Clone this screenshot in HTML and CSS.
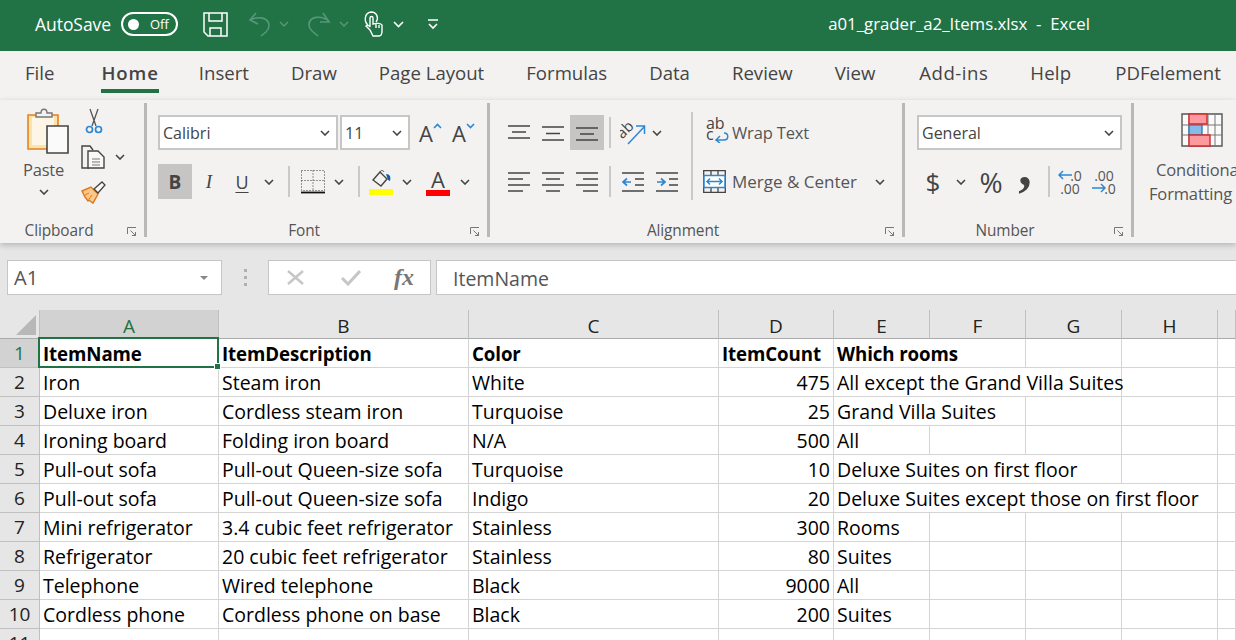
FILE: index.html
```html
<!DOCTYPE html>
<html lang="en">
<head>
<meta charset="utf-8">
<title>a01_grader_a2_Items.xlsx - Excel</title>
<link rel="stylesheet" href="styles.css">
</head>
<body>
<svg class="sprite" aria-hidden="true">
  <symbol id="chev" viewBox="0 0 10 6"><path d="M1 1l4 4 4-4" fill="none" stroke="#444" stroke-width="1.6"/></symbol>
  <symbol id="launch" viewBox="0 0 10 10"><path d="M.5 7V.5H9M3.5 3.5l5 5M8.5 5v3.5H5" fill="none" stroke="#777" stroke-width="1"/></symbol>
</svg>
<div class="app">
<header class="titlebar">
  <span class="autosave">AutoSave</span>
  <span class="toggle"><i class="knob"></i><span class="off">Off</span></span>
  <svg class="qa save" width="25" height="25" viewBox="0 0 25 25"><path d="M1 1h23v23H5l-4-4zM6 1v8h13V1M7 24v-8h11v8" fill="none" stroke="#fff" stroke-width="1.5"/></svg>
  <svg class="qa undo" width="24" height="25" viewBox="0 0 24 25"><path d="M8 1L2 8l8 4M2 8c8-4 19-3 19 6 0 3-2 5-3 6l-5 4" fill="none" stroke="#58977a" stroke-width="1.6"/></svg>
  <svg class="qa c1" width="10" height="6"><path d="M1 1l4 4 4-4" fill="none" stroke="#58977a" stroke-width="1.4"/></svg>
  <svg class="qa redo" width="24" height="25" viewBox="0 0 24 25"><path d="M16 1l6 9h-9M22 9C14 3 2 4 2 13c0 3 2 5 3 6l6 5" fill="none" stroke="#58977a" stroke-width="1.6"/></svg>
  <svg class="qa c1b" width="10" height="6"><path d="M1 1l4 4 4-4" fill="none" stroke="#58977a" stroke-width="1.4"/></svg>
  <svg class="qa touch" width="20" height="26" viewBox="0 0 20 26"><path d="M5 14C1 11 1 2 8 1c6 0 8 6 5 10M7 19L3 15c1-1 3-1 4 1V7c0-2 3-2 3 0v6c3-1 8-1 9 1v6c0 3-1 5-3 5H10c-1-2-2-4-3-6zM13 13v4M16 14v3" fill="none" stroke="#fff" stroke-width="1.4"/></svg>
  <svg class="qa c2" width="11" height="7"><path d="M1 1l4.500 4.500L10 1" fill="none" stroke="#fff" stroke-width="1.6"/></svg>
  <svg class="qa more" width="12" height="11" viewBox="0 0 12 11"><path d="M1 1h10M2 5l4 4 4-4" fill="none" stroke="#fff" stroke-width="1.6"/></svg>
  <span class="doc">a01_grader_a2_Items.xlsx &nbsp;-&nbsp; Excel</span>
</header>

<nav class="tabs">
  <span class="tab first">File</span><span class="tab active">Home</span><span class="tab">Insert</span><span class="tab">Draw</span><span class="tab">Page Layout</span><span class="tab">Formulas</span><span class="tab">Data</span><span class="tab">Review</span><span class="tab">View</span><span class="tab addins">Add-ins</span><span class="tab help">Help</span><span class="tab">PDFelement</span>
</nav>

<section class="ribbon">
  <div class="group g-clip">
    <div class="clip-body">
      <div class="paste">
        <svg width="42" height="46" viewBox="0 0 42 46"><path d="M1 7h30v34H1z" fill="#fbe3ae" stroke="#e8801c" stroke-width="1.6"/><path d="M5 9h22v28H5z" fill="#fdf6e6"/><path d="M9 9V5h5c0-5 6-5 6 0h5v4z" fill="#f3f2f1" stroke="#777" stroke-width="1.4"/><path d="M20 18h21v27H20z" fill="#fafafa" stroke="#444" stroke-width="1.6"/></svg>
        <span class="paste-l">Paste</span>
        <svg class="chev" width="10" height="6"><use href="#chev"/></svg>
      </div>
      <div class="clip-small">
        <svg class="scissors" width="18" height="26" viewBox="0 0 18 26"><path d="M5 1l6 17M13 1L7 18" fill="none" stroke="#555" stroke-width="1.3"/><circle cx="4.500" cy="21.500" r="3" fill="none" stroke="#2d87d2" stroke-width="1.700"/><circle cx="13.500" cy="21.500" r="3" fill="none" stroke="#2d87d2" stroke-width="1.700"/></svg>
        <div class="copy-row">
          <svg width="24" height="24" viewBox="0 0 24 24"><path d="M8 23H1V1h8l3 4" fill="none" stroke="#444" stroke-width="1.4"/><path d="M7 6h10l6 6v11H7z" fill="#f8f8f8" stroke="#444" stroke-width="1.4"/><path d="M11 14h8M11 17h8M11 20h8" stroke="#777"/></svg>
          <svg class="chev" width="10" height="6"><use href="#chev"/></svg>
        </div>
        <svg class="brush" width="25" height="23" viewBox="0 0 25 23"><path d="M1 10l9-4 7 7-5 9c-2-1-3-2-4-3l-1 1c-2-2-4-5-6-10z" fill="#fbc88c" stroke="#e0761a" stroke-width="1.4"/><path d="M4 14l4-2M8 18l3-4" stroke="#e0761a"/><path d="M13 8l8-7 3 3-7 8z" fill="#f8f8f8" stroke="#444" stroke-width="1.3"/></svg>
      </div>
    </div>
    <footer class="glabel"><span>Clipboard</span><svg class="launch" width="10" height="10"><use href="#launch"/></svg></footer>
  </div>

  <div class="group g-font">
    <div class="rows">
      <div class="row">
        <div class="select fontsel"><span>Calibri</span><svg width="10" height="6"><use href="#chev"/></svg></div>
        <div class="select sizesel"><span>11</span><svg width="10" height="6"><use href="#chev"/></svg></div>
        <span class="grow">A<svg width="9" height="6"><path d="M1 5l3.500-3.500L8 5" fill="none" stroke="#2d87d2" stroke-width="1.600"/></svg></span>
        <span class="grow shrink">A<svg width="9" height="6"><path d="M1 1l3.500 3.500L8 1" fill="none" stroke="#2d87d2" stroke-width="1.600"/></svg></span>
      </div>
      <div class="row">
        <span class="cell sel fmt b">B</span>
        <span class="cell fmt i">I</span>
        <span class="cell w32 fmt u">U</span>
        <span class="cell w22"><svg width="10" height="6"><use href="#chev"/></svg></span>
        <i class="vsep"></i>
        <span class="cell w30"><svg width="24" height="24" viewBox="0 0 24 24"><path d="M.5.500h23v20H.5zM12 .500v20M.5 10.500h23" stroke="#333" stroke-width="1" stroke-dasharray="1 2" fill="none"/><path d="M0 22.500h24" stroke="#111" stroke-width="1.800"/></svg></span>
        <span class="cell w22"><svg width="10" height="6"><use href="#chev"/></svg></span>
        <i class="vsep"></i>
        <span class="cell w26"><svg width="24" height="26" viewBox="0 0 24 26"><path d="M4 11l7-8 7 7-6 7z" fill="none" stroke="#444" stroke-width="1.400"/><path d="M11 3c1-2 3-2 4 0" fill="none" stroke="#444"/><path d="M17 5c4 0 5 3 4 7l-2-1z" fill="#0f5fa8"/><path d="M0 20h24v6H0z" fill="#ff0"/></svg></span>
        <span class="cell w26"><svg width="10" height="6"><use href="#chev"/></svg></span>
        <span class="cell w36 colA"><span class="letterA">A</span><i class="red"></i></span>
        <span class="cell w18"><svg width="10" height="6"><use href="#chev"/></svg></span>
      </div>
    </div>
    <footer class="glabel"><span>Font</span><svg class="launch" width="10" height="10"><use href="#launch"/></svg></footer>
  </div>

  <div class="group g-align">
    <div class="align-body">
      <div class="rows">
        <div class="row">
          <span class="cell"><svg width="22" height="18" viewBox="0 0 22 18"><path d="M0 2h22M4 8h14M0 14h22" stroke="#444" stroke-width="1.500"/></svg></span>
          <span class="cell"><svg width="22" height="18" viewBox="0 0 22 18"><path d="M0 3h22M4 9.500h14M0 16h22" stroke="#444" stroke-width="1.500"/></svg></span>
          <span class="cell sel"><svg width="22" height="18" viewBox="0 0 22 18"><path d="M0 4h22M4 10h14M0 16h22" stroke="#444" stroke-width="1.500"/></svg></span>
          <i class="vsep sep-a"></i>
          <span class="cell orient"><svg width="26" height="24" viewBox="0 0 26 24"><text x="-2" y="12" transform="rotate(-45 8 10)" class="svg-ab">ab</text><path d="M8 23L24 6M16 5h8.500v8" fill="none" stroke="#2d87d2" stroke-width="1.500"/></svg></span>
          <span class="cell w14"><svg width="10" height="6"><use href="#chev"/></svg></span>
        </div>
        <div class="row">
          <span class="cell"><svg width="22" height="20" viewBox="0 0 22 20"><path d="M0 1h22M0 7h15M0 13h22M0 19h15" stroke="#444" stroke-width="1.500"/></svg></span>
          <span class="cell"><svg width="22" height="20" viewBox="0 0 22 20"><path d="M0 1h22M4 7h14M0 13h22M4 19h14" stroke="#444" stroke-width="1.500"/></svg></span>
          <span class="cell"><svg width="22" height="20" viewBox="0 0 22 20"><path d="M0 1h22M7 7h15M0 13h22M7 19h15" stroke="#444" stroke-width="1.500"/></svg></span>
          <i class="vsep sep-a"></i>
          <span class="cell"><svg width="22" height="20" viewBox="0 0 22 20"><path d="M0 1h22M13 7h9M13 13h9M0 19h22" stroke="#444" stroke-width="1.500"/><path d="M9 10H1M5 6.500L1 10l4 3.500" fill="none" stroke="#2d87d2" stroke-width="1.700"/></svg></span>
          <span class="cell"><svg width="22" height="20" viewBox="0 0 22 20"><path d="M0 1h22M13 7h9M13 13h9M0 19h22" stroke="#444" stroke-width="1.500"/><path d="M1 10h8M5 6.500L9 10l-4 3.500" fill="none" stroke="#2d87d2" stroke-width="1.700"/></svg></span>
        </div>
      </div>
      <div class="wrap-col">
        <div class="cmd">
          <span class="abc"><span>ab</span><span>c</span><svg width="14" height="11" viewBox="0 0 14 11"><path d="M9 1c5 0 5 7 0 7H2M5 4L1 8l4 3" fill="none" stroke="#2d87d2" stroke-width="1.500"/></svg></span>
          <span>Wrap Text</span>
        </div>
        <div class="cmd merge">
          <svg width="23" height="23" viewBox="0 0 23 23"><path d="M.7.700h21.600v21.600H.7zM8 .700v5M15 .700v5M8 17.500v5M15 17.500v5" fill="none" stroke="#444" stroke-width="1.300"/><path d="M1 5.500h21v12H1z" fill="#fff" stroke="#2d87d2" stroke-width="1.500"/><path d="M4 11.500h15M7 8.500l-3 3 3 3M16 8.500l3 3-3 3" fill="none" stroke="#2d87d2" stroke-width="1.500"/></svg>
          <span>Merge &amp; Center</span>
          <svg class="merge-c" width="10" height="6"><use href="#chev"/></svg>
        </div>
      </div>
    </div>
    <footer class="glabel"><span>Alignment</span><svg class="launch" width="10" height="10"><use href="#launch"/></svg></footer>
  </div>

  <div class="group g-num">
    <div class="rows">
      <div class="row"><div class="select numsel"><span>General</span><svg width="10" height="6"><use href="#chev"/></svg></div></div>
      <div class="row numrow">
        <span class="cell w32 sym dollar">$</span>
        <span class="cell w24"><svg width="10" height="6"><use href="#chev"/></svg></span>
        <span class="cell w36 sym pct">%</span>
        <span class="cell w32 sym comma">,</span>
        <i class="vsep sep-n"></i>
        <span class="cell dec"><span class="t1"><svg width="14" height="10" viewBox="0 0 14 10"><path d="M14 5H1M5 1L1 5l4 4" fill="none" stroke="#2d87d2" stroke-width="1.500"/></svg>.0</span><span>.00</span></span>
        <span class="cell dec"><span>.00</span><span class="t1"><svg width="14" height="10" viewBox="0 0 14 10"><path d="M0 5h13M9 1l4 4-4 4" fill="none" stroke="#2d87d2" stroke-width="1.500"/></svg>.0</span></span>
      </div>
    </div>
    <footer class="glabel"><span>Number</span><svg class="launch" width="10" height="10"><use href="#launch"/></svg></footer>
  </div>

  <div class="g-styles">
    <svg width="42" height="34" viewBox="0 0 42 34"><path d="M1 1h40v32H1z" fill="#fafafa" stroke="#555" stroke-width="1.400"/><path d="M1 12h40M1 22h40M8 1v32M27 1v32M34 1v32" stroke="#777"/><path d="M8 12h13v10H8z" fill="#85bbe8" stroke="#1f6fb5" stroke-width="1.200"/><path d="M8 1h18v10H8zM8 22h21v11H8z" fill="#fc9aa0" stroke="#d42a2a" stroke-width="1.400"/></svg>
    <span class="cf">Conditional</span>
    <span class="cf cf2">Formatting</span>
  </div>
</section>

<section class="fbar">
  <div class="namebox"><span>A1</span><i class="tri"></i></div>
  <div class="grip"><i></i><i></i><i></i></div>
  <div class="fxbox">
    <svg width="19" height="17" viewBox="0 0 19 17"><path d="M2 2l15 13M17 2L2 15" stroke="#c6c6c6" stroke-width="2.400"/></svg>
    <svg width="20" height="17" viewBox="0 0 20 17"><path d="M1 9l6 6L19 2" fill="none" stroke="#c6c6c6" stroke-width="3"/></svg>
    <span class="fx">fx</span>
  </div>
  <div class="finput">ItemName</div>
</section>

<section class="sheet">
  <div class="corner"><i></i></div>
  <div class="ch on">A</div><div class="ch">B</div><div class="ch">C</div><div class="ch">D</div><div class="ch">E</div><div class="ch">F</div><div class="ch">G</div><div class="ch">H</div><div class="ch end"></div>

  <div class="rh on">1</div>
  <div class="c h active">ItemName</div><div class="c h">ItemDescription</div><div class="c h">Color</div><div class="c h">ItemCount</div><div class="c h s2">Which rooms</div><div class="c"></div><div class="c"></div><div class="c"></div>

  <div class="rh">2</div>
  <div class="c">Iron</div><div class="c">Steam iron</div><div class="c">White</div><div class="c n">475</div><div class="c s3">All except the Grand Villa Suites</div><div class="c"></div><div class="c"></div>

  <div class="rh">3</div>
  <div class="c">Deluxe iron</div><div class="c">Cordless steam iron</div><div class="c">Turquoise</div><div class="c n">25</div><div class="c s2">Grand Villa Suites</div><div class="c"></div><div class="c"></div><div class="c"></div>

  <div class="rh">4</div>
  <div class="c">Ironing board</div><div class="c">Folding iron board</div><div class="c">N/A</div><div class="c n">500</div><div class="c">All</div><div class="c"></div><div class="c"></div><div class="c"></div><div class="c"></div>

  <div class="rh">5</div>
  <div class="c">Pull-out sofa</div><div class="c">Pull-out Queen-size sofa</div><div class="c">Turquoise</div><div class="c n">10</div><div class="c s3">Deluxe Suites on first floor</div><div class="c"></div><div class="c"></div>

  <div class="rh">6</div>
  <div class="c">Pull-out sofa</div><div class="c">Pull-out Queen-size sofa</div><div class="c">Indigo</div><div class="c n">20</div><div class="c s4">Deluxe Suites except those on first floor</div><div class="c"></div>

  <div class="rh">7</div>
  <div class="c">Mini refrigerator</div><div class="c">3.4 cubic feet refrigerator</div><div class="c">Stainless</div><div class="c n">300</div><div class="c">Rooms</div><div class="c"></div><div class="c"></div><div class="c"></div><div class="c"></div>

  <div class="rh">8</div>
  <div class="c">Refrigerator</div><div class="c">20 cubic feet refrigerator</div><div class="c">Stainless</div><div class="c n">80</div><div class="c">Suites</div><div class="c"></div><div class="c"></div><div class="c"></div><div class="c"></div>

  <div class="rh">9</div>
  <div class="c">Telephone</div><div class="c">Wired telephone</div><div class="c">Black</div><div class="c n">9000</div><div class="c">All</div><div class="c"></div><div class="c"></div><div class="c"></div><div class="c"></div>

  <div class="rh">10</div>
  <div class="c">Cordless phone</div><div class="c">Cordless phone on base</div><div class="c">Black</div><div class="c n">200</div><div class="c">Suites</div><div class="c"></div><div class="c"></div><div class="c"></div><div class="c"></div>

  <div class="rh">11</div>
  <div class="c"></div><div class="c"></div><div class="c"></div><div class="c"></div><div class="c"></div><div class="c"></div><div class="c"></div><div class="c"></div><div class="c"></div>
</section>
</div>
</body>
</html>
```

FILE: styles.css
```css
* { box-sizing: border-box; }
html, body { margin: 0; height: 100%; overflow: hidden; }
body { font-family: "Open Sans", "Noto Sans", sans-serif; color: #444; background: #e6e6e6; }
.sprite { display: none; }
.app { width: 1236px; height: 640px; overflow: hidden; display: flex; flex-direction: column; }
svg { display: block; flex: none; }
i { display: block; }

/* title bar */
.titlebar { flex: none; height: 51px; background: #217346; color: #fff; display: flex; align-items: center; padding: 0 0 3px 35px; }
.autosave { font-size: 17.500px; letter-spacing: -.05px; width: 86px; white-space: nowrap; }
.toggle { width: 57px; height: 24px; border: 2px solid #fff; border-radius: 12px; display: flex; align-items: center; padding-left: 5px; }
.knob { width: 11px; height: 11px; border-radius: 50%; background: #fff; }
.off { font-size: 13px; margin-left: 11px; }
.save { margin-left: 25px; }
.undo { margin-left: 20px; }
.c1 { margin-left: 7px; }
.redo { margin-left: 18px; }
.c1b { margin-left: 8px; }
.touch { margin-left: 14px; }
.c2 { margin-left: 10px; }
.more { margin-left: 23px; }
.doc { margin: 0 146px 2px auto; font-size: 16.800px; }

/* tabs */
.tabs { flex: none; height: 49px; background: #f3f2f1; display: flex; gap: 42px; padding-left: 25px; font-size: 18.600px; color: #444; }
.tab { height: 42px; padding-top: 9px; white-space: nowrap; }
.tab.first { margin-right: 5px; }
.tab.active { font-weight: 600; border-bottom: 4px solid #217346; letter-spacing: .9px; margin-right: -2px; }
.tab.addins { letter-spacing: .5px; margin-left: 2px; }
.tab.help { letter-spacing: .2px; margin-right: 2px; }

/* ribbon */
.ribbon { flex: none; height: 143px; background: #f3f2f1; display: flex; align-items: flex-start; box-shadow: 0 2px 6px rgba(0,0,0,.22); position: relative; z-index: 1; font-size: 16.500px; padding-top: 3px; overflow: hidden; }
.group { height: 134px; border-right: 3px solid #b8b8b8; display: flex; flex-direction: column; flex: none; position: relative; }
.g-clip { width: 147px; }
.g-font { width: 343px; padding: 12px 0 0 11px; }
.g-align { width: 415px; padding: 12px 0 0 12px; }
.g-num { width: 229px; padding: 12px 0 0 12px; }
.glabel { height: 14px; padding-right: 26px; display: flex; justify-content: center; align-items: center; font-size: 15.400px; color: #555; letter-spacing: -.1px; position: absolute; left: 0; right: 0; bottom: 0; }
.launch { position: absolute; right: 7px; top: 4px; }

.clip-body { display: flex; padding: 5px 0 0 23px; }
.paste { width: 54px; display: flex; flex-direction: column; align-items: center; }
.paste svg:first-child { align-self: flex-start; margin-left: 4px; }
.paste-l { font-size: 16.500px; margin-top: 5px; line-height: 22px; letter-spacing: -.2px; color: #555; margin-left: -13px; }
.paste .chev { margin: 8px 13px 0 0; }
.clip-small { margin-left: 4px; display: flex; flex-direction: column; }
.scissors { margin-left: 4px; }
.copy-row { display: flex; align-items: center; gap: 10px; margin-top: 11px; }
.brush { margin-top: 12px; }

.rows { display: flex; flex-direction: column; gap: 14px; flex: none; }
.row { display: flex; height: 35px; align-items: center; }
.select { height: 35px; background: #fff; border: 2px solid #c6c6c6; display: flex; align-items: center; justify-content: space-between; padding: 0 6px 0 3px; color: #444; font-size: 16px; }
.fontsel { width: 180px; }
.sizesel { width: 70px; margin-left: 2px; }
.numsel { width: 205px; }
.grow { width: 35px; margin-left: 9px; font-size: 22px; display: flex; color: #444; }
.grow svg { margin-top: 5px; }
.shrink { margin-left: -2px; }
.cell { width: 34px; height: 35px; display: flex; align-items: center; justify-content: center; flex: none; }
.cell.sel { background: #c6c5c4; }
.w14 { width: 14px; } .w18 { width: 18px; } .w22 { width: 22px; } .w24 { width: 24px; } .w26 { width: 26px; } .w30 { width: 30px; } .w32 { width: 32px; } .w36 { width: 36px; }
.fmt { font-family: "Liberation Serif", serif; font-size: 19px; }
.b { font-family: "Open Sans", sans-serif; font-weight: 700; }
.i { font-style: italic; }
.u { font-family: "Open Sans", sans-serif; text-decoration: underline; text-underline-offset: 3px; font-size: 18px; }
.vsep { width: 2px; height: 31px; background: #c9c9c9; margin: 0 8px; flex: none; }
.sep-a { margin: 0 5px; }
.sep-n { margin: 0 3px 0 7px; }
.colA { flex-direction: column; }
.letterA { font-size: 22px; line-height: 22px; color: #444; }
.red { width: 24px; height: 6px; background: #f00; }
.svg-ab { font: 15px "Open Sans", sans-serif; fill: #444; }

.align-body { display: flex; }
.wrap-col { margin-left: 7px; border-left: 2px solid #c9c9c9; height: 88px; margin-top: -3px; padding-left: 10px; display: flex; flex-direction: column; width: 200px; font-size: 16.500px; letter-spacing: -.15px; color: #555; }
.cmd { display: flex; align-items: center; height: 35px; margin-top: 3px; gap: 5px; }
.merge { margin-top: 14px; gap: 6px; font-size: 17px; letter-spacing: 0; }
.merge-c { margin-left: 12px; }
.abc { width: 21px; height: 30px; position: relative; font-size: 16px; line-height: 11px; display: flex; flex-direction: column; color: #444; margin-left: 3px; }
.abc svg { position: absolute; left: 9px; top: 14px; }
.numrow .sym { color: #444; }
.dollar { font-size: 26px; }
.pct { font-size: 28px; }
.comma { font-family: "Liberation Serif", serif; font-weight: 700; font-size: 54px; line-height: 20px; padding-bottom: 30px; }
.dec { flex-direction: column; font-size: 14px; line-height: 13px; align-items: center; color: #555; }
.dec .t1 { display: flex; align-items: center; }
.dec .t1 svg { margin-right: -2px; }
.g-styles { flex: none; width: 100px; padding-top: 10px; display: flex; flex-direction: column; align-items: flex-start; padding-left: 47px; white-space: nowrap; color: #555; font-size: 16.500px; letter-spacing: -.15px; }
.cf { margin-left: -25px; margin-top: 12px; line-height: 22px; }
.cf2 { margin-left: -32px; margin-top: 2px; }

/* formula bar */
.fbar { flex: none; height: 67px; background: #e6e6e6; display: flex; padding-top: 17px; align-items: flex-start; color: #555; }
.namebox { width: 215px; height: 35px; margin-left: 7px; background: #fff; border: 1px solid #c6c6c6; display: flex; align-items: center; justify-content: space-between; padding: 0 13px 0 6px; font-size: 20px; }
.tri { width: 0; height: 0; border: 4px solid transparent; border-top: 4px solid #888; margin-top: 4px; }
.grip { width: 46px; height: 35px; display: flex; flex-direction: column; align-items: center; justify-content: center; gap: 4px; }
.grip i { width: 3px; height: 3px; background: #b0b0b0; }
.fxbox { width: 163px; height: 35px; background: #fff; border: 1px solid #c6c6c6; display: flex; align-items: center; padding-left: 17px; gap: 36px; }
.fx { font-family: "Liberation Serif", serif; font-style: italic; font-weight: 700; font-size: 24px; color: #777; margin-left: -3px; }
.finput { flex: 1; height: 35px; margin-left: 5px; background: #fff; border: 1px solid #c6c6c6; border-right: 0; padding: 4px 0 0 16px; font-size: 19.500px; color: #555; }

/* sheet */
.sheet { flex: 1; display: grid; grid-template-columns: 40px 179px 250px 250px 115px 96px 96px 96px 96px 18px; grid-template-rows: 29px repeat(11, 29px); background: #fff; font-size: 19.500px; color: #000; }
.corner { background: #e6e6e6; border-bottom: 1px solid #ababab; border-right: 1px solid #c0c0c0; position: relative; }
.corner i { position: absolute; right: 3px; bottom: 3px; width: 0; height: 0; border-left: 20px solid transparent; border-bottom: 20px solid #b8b8b8; }
.ch { background: #e6e6e6; border-right: 1px solid #c0c0c0; border-bottom: 1px solid #ababab; display: flex; align-items: center; justify-content: center; font-size: 19px; color: #222; padding-top: 3px; }
.ch.on { background: #d2d2d2; color: #217346; }
.rh { background: #e6e6e6; border-right: 1px solid #c0c0c0; border-bottom: 1px solid #c0c0c0; display: flex; align-items: center; justify-content: center; font-size: 19px; color: #222; }
.rh.on { background: #d2d2d2; color: #217346; }
.c { border-right: 1px solid #d4d4d4; border-bottom: 1px solid #d4d4d4; padding: 0 3px; line-height: 29px; white-space: nowrap; min-width: 0; }
.c.h { font-weight: 700; font-size: 18.700px; letter-spacing: -.1px; }
.c.n { text-align: right; }
.c.s2 { grid-column: span 2; }
.c.s3 { grid-column: span 3; }
.c.s4 { grid-column: span 4; }
.c.active { border: 2px solid #217346; margin: -2px 0 0 -2px; padding: 0 0 0 3px; line-height: 29px; position: relative; z-index: 2; }
.c.active::after { content: ""; position: absolute; right: -4px; bottom: -4px; width: 5px; height: 5px; background: #217346; border: 1px solid #fff; box-sizing: content-box; }
```
